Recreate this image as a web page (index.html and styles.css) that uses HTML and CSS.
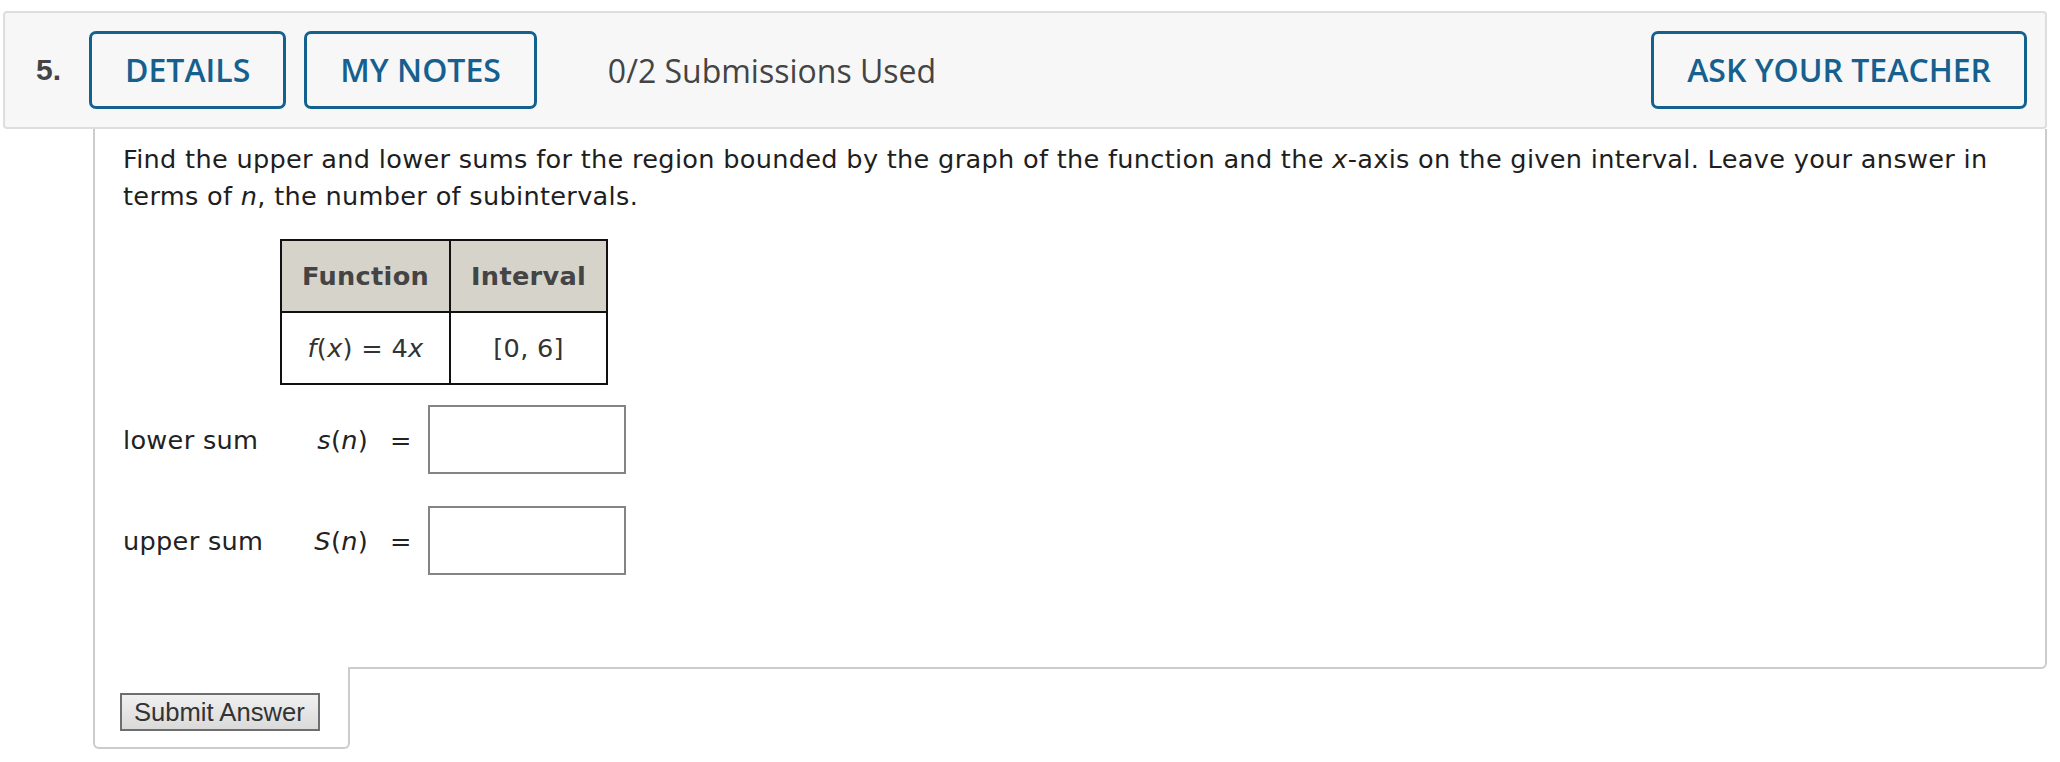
FILE: index.html
```html
<!DOCTYPE html>
<html>
<head>
<meta charset="utf-8">
<link rel="stylesheet" href="styles.css">
</head>
<body>
<div class="page">
  <div class="qhead">
    <span class="qnum">5.</span>
    <button class="hbtn">DETAILS</button>
    <button class="hbtn">MY NOTES</button>
    <span class="subs">0/2 Submissions Used</span>
    <button class="hbtn ask">ASK YOUR TEACHER</button>
  </div>
  <div class="qbody">
    <p class="prompt">Find the upper and lower sums for the region bounded by the graph of the function and the <i>x</i>-axis on the given interval. Leave your answer in terms of <i>n</i>, the number of subintervals.</p>
    <table class="ftable">
      <tr><th>Function</th><th>Interval</th></tr>
      <tr><td><i>f</i>(<i>x</i>) = 4<i>x</i></td><td>[0, 6]</td></tr>
    </table>
    <div class="answers">
      <div class="arow">
        <span class="alabel">lower sum</span>
        <span class="amath"><i>s</i>(<i>n</i>)</span>
        <span class="aeq">=</span>
        <input class="abox" type="text">
      </div>
      <div class="arow">
        <span class="alabel">upper sum</span>
        <span class="amath"><i>S</i>(<i>n</i>)</span>
        <span class="aeq">=</span>
        <input class="abox" type="text">
      </div>
    </div>
  </div>
  <div class="qfoot">
    <button class="submit">Submit Answer</button>
  </div>
</div>
</body>
</html>
```
FILE: styles.css
```css
html, body {
  margin: 0;
  padding: 0;
  background: #ffffff;
}
.page {
  padding: 11px 13px 0 3px;
  font-family: "DejaVu Sans", Verdana, sans-serif;
  font-size: 25.6px;
  color: #222;
}
.qhead {
  display: flex;
  align-items: center;
  background: #f7f7f7;
  border: 2px solid #dedede;
  border-radius: 4px;
  padding: 18px 18px 18px 31px;
}
.qnum {
  font-family: "Liberation Sans", Arial, sans-serif;
  font-weight: bold;
  font-size: 30px;
  color: #444;
  margin-right: 28px;
}
.hbtn {
  font-family: "Open Sans", sans-serif;
  font-weight: 600;
  font-size: 32px;
  line-height: 40px;
  color: #15608f;
  background: transparent;
  border: 3px solid #13618f;
  border-radius: 7px;
  padding: 16px 33px;
  margin: 0 18px 0 0;
  cursor: pointer;
}
.subs {
  font-family: "Open Sans", sans-serif;
  font-size: 32px;
  color: #444;
  margin-left: 53px;
}
.hbtn.ask {
  margin-left: auto;
  margin-right: 0;
}
.qbody {
  margin-left: 90px;
  border-left: 2px solid #cccccc;
  border-right: 2px solid #cccccc;
  border-bottom: 2px solid #cccccc;
  border-bottom-right-radius: 6px;
  padding: 12px 28px 92px 28px;
}
.prompt {
  margin: 0;
  line-height: 37px;
  color: #1e1e1e;
  letter-spacing: 0.3px;
}
.ftable {
  border-collapse: collapse;
  margin: 24px 0 0 157px;
  letter-spacing: 0.3px;
}
.ftable th, .ftable td {
  border: 2px solid #111;
  padding: 20px 20px 20px;
  line-height: 30px;
  text-align: center;
}
.ftable th {
  background: #d6d3ca;
  color: #444;
  font-weight: bold;
}
.ftable td {
  color: #333;
}
.answers {
  display: flex;
  flex-direction: column;
  gap: 32px;
  margin-top: 20px;
}
.arow {
  display: flex;
  align-items: center;
  letter-spacing: 0.3px;
}
.alabel {
  width: 180px;
}
.amath {
  width: 65px;
  text-align: right;
}
.aeq {
  margin: 0 16px 0 22px;
}
.abox {
  width: 198px;
  height: 69px;
  box-sizing: border-box;
  border: 2px solid #848484;
  padding: 0;
  margin: 0;
  background: #fff;
}
.qfoot {
  display: inline-block;
  margin-left: 90px;
  margin-top: -2px;
  background: #fff;
  border-left: 2px solid #cccccc;
  border-right: 2px solid #cccccc;
  border-bottom: 2px solid #cccccc;
  border-radius: 0 0 6px 6px;
  padding: 26px 28px 16px 25px;
  position: relative;
}
.submit {
  display: block;
  font-family: "Liberation Sans", Arial, sans-serif;
  font-size: 25.6px;
  line-height: 34px;
  color: #333;
  background: linear-gradient(#f0f0f0, #dadada);
  border: 2px solid #6e6e6e;
  border-radius: 0;
  padding: 0 13px 0 12px;
  margin: 0;
}
```
